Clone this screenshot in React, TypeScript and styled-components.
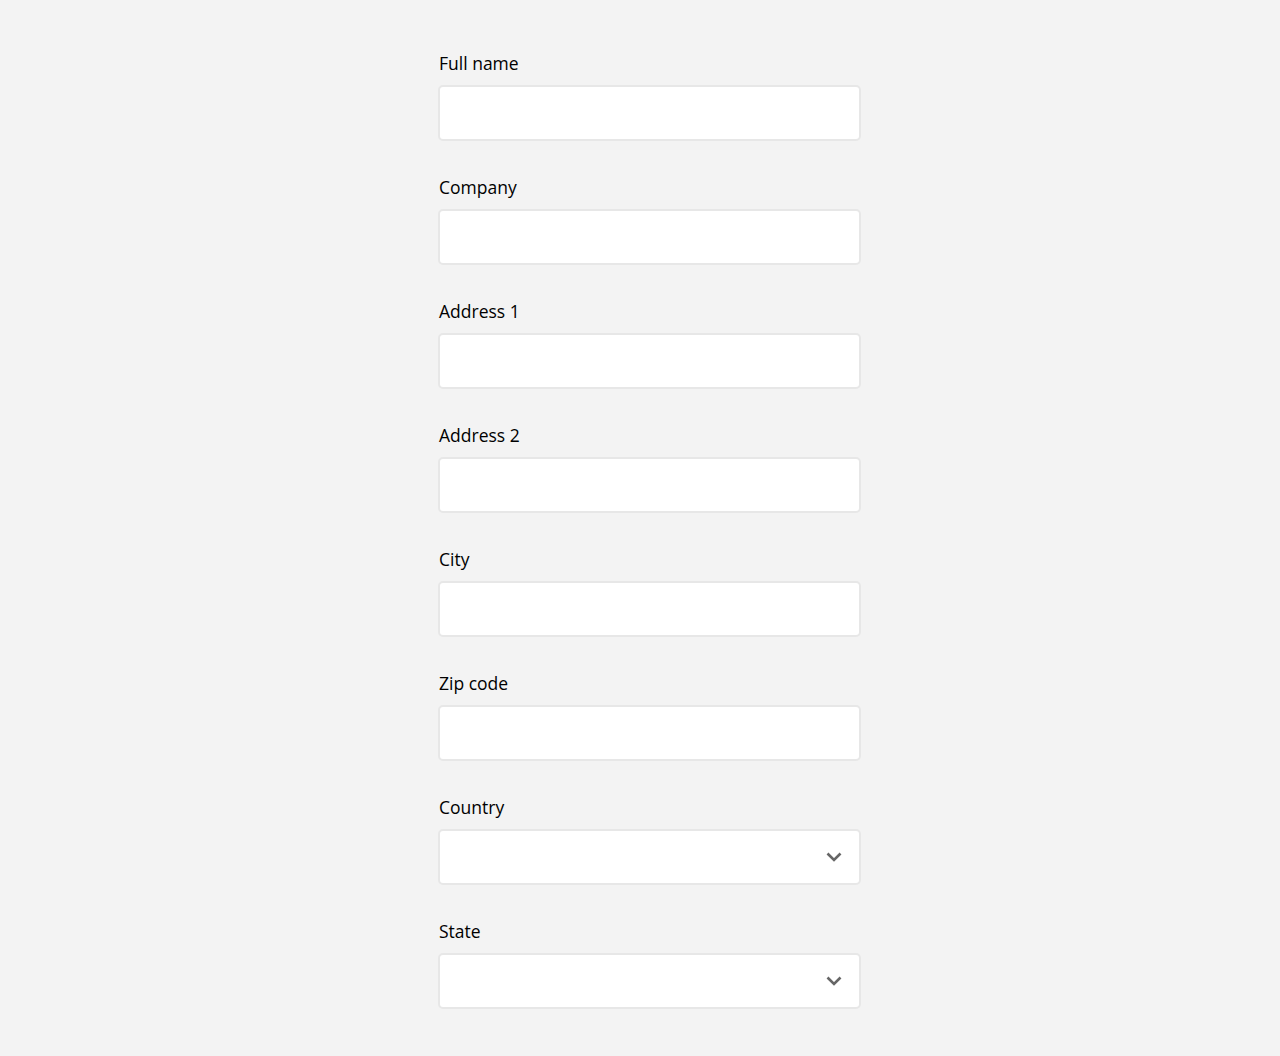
import styled, { createGlobalStyle } from "styled-components";

const GlobalStyle = createGlobalStyle`
  html, body {
    margin: 0;
    padding: 0;
    background: #f3f3f3;
    font-family: "Open Sans", "Liberation Sans", sans-serif;
  }
`;

const Page = styled.div`
  min-height: 1056px;
  display: flex;
  justify-content: center;
  padding-top: 51px;
  box-sizing: border-box;
`;

const Form = styled.form`
  width: 442px;
  padding-left: 19px;
  box-sizing: border-box;
  display: flex;
  flex-direction: column;
  gap: 34px;
`;

const Field = styled.div`
  display: flex;
  flex-direction: column;
  gap: 10px;
`;

const Label = styled.label`
  font-size: 17.5px;
  font-weight: 500;
  line-height: 24px;
  color: #000;
  padding-left: 1px;
`;

const Box = styled.div`
  position: relative;
  height: 56px;
  box-sizing: border-box;
  background: #fff;
  border: 2px solid #e7e7e7;
  border-radius: 5px;
`;

const Input = styled.input`
  width: 100%;
  height: 100%;
  border: none;
  outline: none;
  background: transparent;
  padding: 0 14px;
  box-sizing: border-box;
  font-family: inherit;
  font-size: 16px;
`;

const Chevron = styled.svg`
  position: absolute;
  right: 16px;
  top: 50%;
  transform: translateY(-50%);
  pointer-events: none;
`;

const fields: { label: string; select?: boolean }[] = [
  { label: "Full name" },
  { label: "Company" },
  { label: "Address 1" },
  { label: "Address 2" },
  { label: "City" },
  { label: "Zip code" },
  { label: "Country", select: true },
  { label: "State", select: true },
];

export default function App() {
  return (
    <>
      <GlobalStyle />
      <Page>
        <Form onSubmit={(e) => e.preventDefault()}>
          {fields.map((f) => (
            <Field key={f.label}>
              <Label>{f.label}</Label>
              <Box>
                <Input type="text" readOnly={f.select} />
                {f.select && (
                  <Chevron width="18" height="12" viewBox="0 0 18 12">
                    <path d="M2.5 2.5 L9 9 L15.5 2.5" fill="none" stroke="#666" strokeWidth="2.6" />
                  </Chevron>
                )}
              </Box>
            </Field>
          ))}
        </Form>
      </Page>
    </>
  );
}
